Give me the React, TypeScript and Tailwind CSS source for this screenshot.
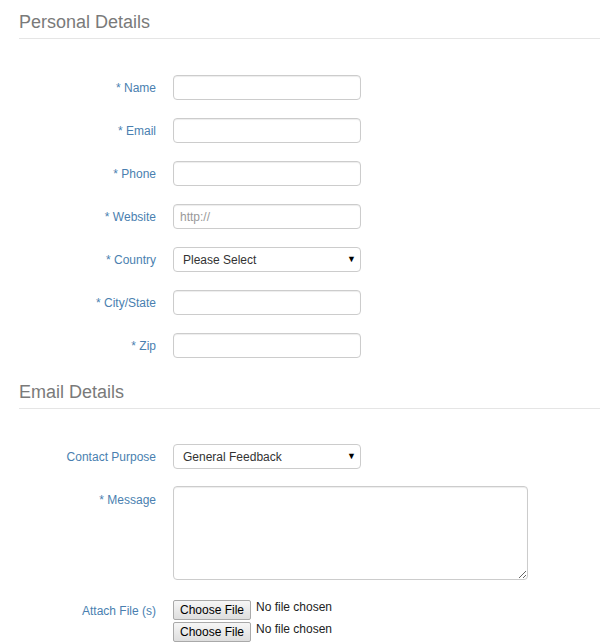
import React from 'react';

const labelCls = 'w-[137px] shrink-0 text-right text-[12px] text-[#4a7fb0]';
const inputCls =
  'w-[188px] h-[25px] rounded-[4px] border border-[#cccccc] bg-white shadow-[inset_0_1px_1px_rgba(0,0,0,0.075)] px-[6px] text-[12px] text-[#333] outline-none';

function Heading({ title }: { title: string }) {
  return (
    <div className="h-[39px] border-b border-[#e5e5e5] pt-[12px]">
      <h2 className="text-[18px] leading-[20px] text-[#7a7a7a]">{title}</h2>
    </div>
  );
}

function Row({ label, children }: { label: string; children: React.ReactNode }) {
  return (
    <div className="flex items-center gap-[17px] h-[25px]">
      <label className={labelCls}>{label}</label>
      {children}
    </div>
  );
}

function FakeSelect({ value }: { value: string }) {
  return (
    <div className="w-[188px] h-[25px] rounded-[4px] border border-[#cccccc] bg-white flex items-center justify-between pl-[9px] pr-[4px] text-[12px] text-[#333]">
      <span>{value}</span>
      <span className="text-[9px] text-black">▼</span>
    </div>
  );
}

function FileInput() {
  return (
    <div className="flex items-start gap-[5px] h-[20px]">
      <button className="h-[20px] w-[78px] rounded-[2px] border border-[#a9a9a9] bg-gradient-to-b from-[#f6f6f6] to-[#dedede] text-[12px] text-black">
        Choose File
      </button>
      <span className="pt-[1px] text-[12px] leading-[13px] text-[#222]">No file chosen</span>
    </div>
  );
}

export default function App() {
  const personal = ['* Name', '* Email', '* Phone'];
  return (
    <div className="w-[600px] h-[642px] overflow-hidden bg-white pl-[19px] font-['Liberation_Sans',Arial,sans-serif]">
      <Heading title="Personal Details" />
      <div className="mt-[36px] flex flex-col gap-[18px]">
        {personal.map((l) => (
          <Row key={l} label={l}>
            <input className={inputCls} />
          </Row>
        ))}
        <Row label="* Website">
          <input className={inputCls + ' placeholder:text-[#999]'} placeholder="http://" />
        </Row>
        <Row label="* Country">
          <FakeSelect value="Please Select" />
        </Row>
        <Row label="* City/State">
          <input className={inputCls} />
        </Row>
        <Row label="* Zip">
          <input className={inputCls} />
        </Row>
      </div>

      <div className="mt-[12px]">
        <Heading title="Email Details" />
      </div>
      <div className="mt-[35px] flex flex-col">
        <Row label="Contact Purpose">
          <FakeSelect value="General Feedback" />
        </Row>
        <div className="mt-[17px] flex gap-[17px]">
          <label className={labelCls + ' pt-[5px]'}>* Message</label>
          <textarea className="w-[355px] h-[94px] rounded-[4px] border border-[#cccccc] bg-white shadow-[inset_0_1px_1px_rgba(0,0,0,0.075)] resize-y outline-none" />
        </div>
        <div className="mt-[20px] flex gap-[17px]">
          <label className={labelCls + ' pt-[2px]'}>Attach File (s)</label>
          <div className="flex flex-col gap-[2px]">
            <FileInput />
            <FileInput />
          </div>
        </div>
      </div>
    </div>
  );
}
